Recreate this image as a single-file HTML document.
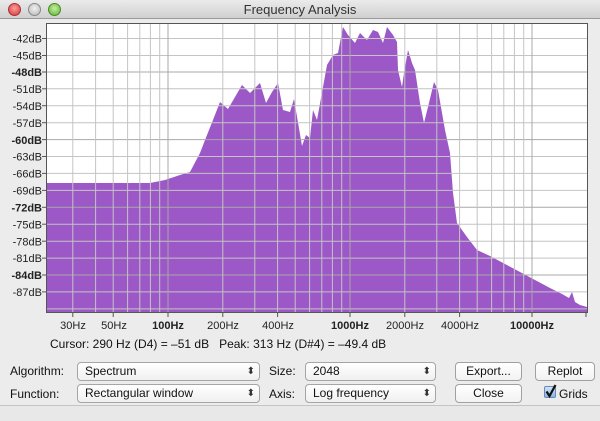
<!DOCTYPE html>
<html><head><meta charset="utf-8"><style>
*{margin:0;padding:0;box-sizing:border-box}
body{width:600px;height:421px;overflow:hidden;background:#ececec;font-family:"Liberation Sans",sans-serif;font-size:12px;color:#111;position:relative}
.t{position:absolute;white-space:nowrap}
.title{position:absolute;left:0;top:0;width:600px;height:19px;background:linear-gradient(#ebebeb,#d0d0d0);border-bottom:1px solid #9a9a9a;text-align:center;font-size:13px;line-height:19px;color:#333}
.dot{position:absolute;top:3px;width:13px;height:13px;border-radius:50%;border:1px solid #888}
.sel{position:absolute;height:19px;background:linear-gradient(#fff,#f0f0f0);border:1px solid #a5a5a5;border-radius:4px;font-size:12px;line-height:17px;padding-left:7px}
.sel:after{content:"⬍";position:absolute;right:4px;top:0;font-size:10px;color:#333}
.btn{position:absolute;height:19px;background:linear-gradient(#fff,#f2f2f2);border:1px solid #a0a0a0;border-radius:4px;text-align:center;line-height:17px;font-size:12px}
</style></head><body>
<div class="title">Frequency Analysis</div>
<div class="dot" style="left:8px;background:radial-gradient(circle at 50% 40%,#f9a0a0,#d9322f);border-color:#a33"></div>
<div class="dot" style="left:28px;background:radial-gradient(circle at 50% 40%,#f0f0f0,#b5b5b5)"></div>
<div class="dot" style="left:48px;background:radial-gradient(circle at 50% 40%,#c6f0a0,#5cae2e);border-color:#4a8a2a"></div>

<svg style="position:absolute;left:0;top:0" width="600" height="340" font-family="Liberation Sans, sans-serif" font-size="11">
<rect x="46.5" y="23.5" width="541" height="289" fill="#fff" stroke="#555"/>
<polygon fill="#9b58c6" points="47,183 150,183 165,180 180,175 190,172 200,153 207,135 213,120 220,102 228,109 242,85 250,93 260,83 266,103 272,92 278,83 283,110 290,112 294,99 302,146 306,135 310,138 313,110 317,120 323,87 327,65 333,55 338,53 343,27 348,35 355,43 360,33 367,40 373,30 378,32 383,43 387,27 393,35 397,42 398,70 402,87 404,73 408,50 412,63 415,70 420,103 424,123 428,107 434,82 438,90 445,130 450,153 453,193 457,223 467,237 477,250 490,256 505,264 520,272 535,280 550,288 562,294 569,298 572,292 575,302 580,305 587,307 587,312 47,312"/>
<g stroke="#c4c4c4" stroke-width="1">
<line x1="47" x2="587" y1="38.5" y2="38.5"/><line x1="47" x2="587" y1="55.5" y2="55.5"/><line x1="47" x2="587" y1="72" y2="72" stroke="#a8a8a8"/><line x1="47" x2="587" y1="88.8" y2="88.8"/><line x1="47" x2="587" y1="105.7" y2="105.7"/><line x1="47" x2="587" y1="122.7" y2="122.7"/><line x1="47" x2="587" y1="139.6" y2="139.6" stroke="#a8a8a8"/><line x1="47" x2="587" y1="156.5" y2="156.5"/><line x1="47" x2="587" y1="173.4" y2="173.4"/><line x1="47" x2="587" y1="190.4" y2="190.4"/><line x1="47" x2="587" y1="207.3" y2="207.3" stroke="#a8a8a8"/><line x1="47" x2="587" y1="224.2" y2="224.2"/><line x1="47" x2="587" y1="241.2" y2="241.2"/><line x1="47" x2="587" y1="258.1" y2="258.1"/><line x1="47" x2="587" y1="275" y2="275" stroke="#a8a8a8"/><line x1="47" x2="587" y1="291.9" y2="291.9"/><line x1="47" x2="587" y1="308.9" y2="308.9"/>
<line y1="24" y2="312" x1="72.8" x2="72.8"/><line y1="24" y2="312" x1="95.6" x2="95.6"/><line y1="24" y2="312" x1="113.2" x2="113.2"/><line y1="24" y2="312" x1="127.6" x2="127.6"/><line y1="24" y2="312" x1="139.8" x2="139.8"/><line y1="24" y2="312" x1="150.4" x2="150.4"/><line y1="24" y2="312" x1="159.7" x2="159.7"/><line y1="24" y2="312" x1="168" x2="168" stroke="#a8a8a8"/>
<line y1="24" y2="312" x1="222.8" x2="222.8"/><line y1="24" y2="312" x1="254.8" x2="254.8"/><line y1="24" y2="312" x1="277.6" x2="277.6"/><line y1="24" y2="312" x1="295.2" x2="295.2"/><line y1="24" y2="312" x1="309.6" x2="309.6"/><line y1="24" y2="312" x1="321.8" x2="321.8"/><line y1="24" y2="312" x1="332.4" x2="332.4"/><line y1="24" y2="312" x1="341.7" x2="341.7"/><line y1="24" y2="312" x1="350" x2="350" stroke="#a8a8a8"/>
<line y1="24" y2="312" x1="404.8" x2="404.8"/><line y1="24" y2="312" x1="436.8" x2="436.8"/><line y1="24" y2="312" x1="459.6" x2="459.6"/><line y1="24" y2="312" x1="477.2" x2="477.2"/><line y1="24" y2="312" x1="491.6" x2="491.6"/><line y1="24" y2="312" x1="503.8" x2="503.8"/><line y1="24" y2="312" x1="514.4" x2="514.4"/><line y1="24" y2="312" x1="523.7" x2="523.7"/><line y1="24" y2="312" x1="532" x2="532" stroke="#a8a8a8"/>
</g>
<g stroke="#555"><line x1="42" x2="46" y1="38.5" y2="38.5"/><line x1="42" x2="46" y1="55.5" y2="55.5"/><line x1="42" x2="46" y1="72" y2="72"/><line x1="42" x2="46" y1="88.8" y2="88.8"/><line x1="42" x2="46" y1="105.7" y2="105.7"/><line x1="42" x2="46" y1="122.7" y2="122.7"/><line x1="42" x2="46" y1="139.6" y2="139.6"/><line x1="42" x2="46" y1="156.5" y2="156.5"/><line x1="42" x2="46" y1="173.4" y2="173.4"/><line x1="42" x2="46" y1="190.4" y2="190.4"/><line x1="42" x2="46" y1="207.3" y2="207.3"/><line x1="42" x2="46" y1="224.2" y2="224.2"/><line x1="42" x2="46" y1="241.2" y2="241.2"/><line x1="42" x2="46" y1="258.1" y2="258.1"/><line x1="42" x2="46" y1="275" y2="275"/><line x1="42" x2="46" y1="291.9" y2="291.9"/>
<line y1="313" y2="317" x1="72.8" x2="72.8"/><line y1="313" y2="317" x1="113.2" x2="113.2"/><line y1="313" y2="317" x1="168" x2="168"/><line y1="313" y2="317" x1="222.8" x2="222.8"/><line y1="313" y2="317" x1="277.6" x2="277.6"/><line y1="313" y2="317" x1="350" x2="350"/><line y1="313" y2="317" x1="404.8" x2="404.8"/><line y1="313" y2="317" x1="459.6" x2="459.6"/><line y1="313" y2="317" x1="532" x2="532"/><line y1="313" y2="317" x1="586" x2="586"/></g>
<g text-anchor="end" fill="#222"><text x="42" y="42.5">-42dB</text><text x="42" y="59.5">-45dB</text><text x="42" y="76" font-weight="bold">-48dB</text><text x="42" y="93">-51dB</text><text x="42" y="110">-54dB</text><text x="42" y="127">-57dB</text><text x="42" y="144" font-weight="bold">-60dB</text><text x="42" y="160.5">-63dB</text><text x="42" y="177.5">-66dB</text><text x="42" y="194.5">-69dB</text><text x="42" y="211.5" font-weight="bold">-72dB</text><text x="42" y="228.5">-75dB</text><text x="42" y="245.5">-78dB</text><text x="42" y="262">-81dB</text><text x="42" y="279" font-weight="bold">-84dB</text><text x="42" y="296">-87dB</text></g>
<g text-anchor="middle" fill="#222"><text x="73" y="329">30Hz</text><text x="114" y="329">50Hz</text><text x="168" y="329" font-weight="bold">100Hz</text><text x="223" y="329">200Hz</text><text x="278" y="329">400Hz</text><text x="350" y="329" font-weight="bold">1000Hz</text><text x="405" y="329">2000Hz</text><text x="460" y="329">4000Hz</text><text x="532" y="329" font-weight="bold">10000Hz</text></g>
</svg>

<div class="t" style="left:50px;top:337px">Cursor: 290 Hz (D4) = –51 dB&nbsp;&nbsp;&nbsp;Peak: 313 Hz (D#4) = –49.4 dB</div>
<div class="t" style="left:10px;top:364px">Algorithm:</div>
<div class="t" style="left:10px;top:387px">Function:</div>
<div class="sel" style="left:77px;top:362px;width:183px">Spectrum</div>
<div class="sel" style="left:77px;top:384px;width:183px">Rectangular window</div>
<div class="t" style="left:269px;top:364px">Size:</div>
<div class="t" style="left:269px;top:387px">Axis:</div>
<div class="sel" style="left:305px;top:362px;width:131px">2048</div>
<div class="sel" style="left:305px;top:384px;width:131px">Log frequency</div>
<div class="btn" style="left:455px;top:362px;width:67px">Export...</div>
<div class="btn" style="left:455px;top:384px;width:67px">Close</div>
<div class="btn" style="left:535px;top:362px;width:60px">Replot</div>
<div style="position:absolute;left:544px;top:386px;width:12px;height:12px;border:1px solid #6a8ab0;border-radius:2px;background:linear-gradient(#cfe3f7,#8ab5e5)"></div>
<svg style="position:absolute;left:544px;top:383px" width="14" height="16"><path d="M2.5 8.5 L5.5 13 L11.5 2" fill="none" stroke="#111" stroke-width="2.2"/></svg>
<div class="t" style="left:559px;top:387px">Grids</div>
<div style="position:absolute;left:0;top:405px;width:600px;height:1px;background:#c4c4c4"></div>
<div style="position:absolute;left:0;top:406px;width:600px;height:15px;background:#e8e8e8"></div>
</body></html>
